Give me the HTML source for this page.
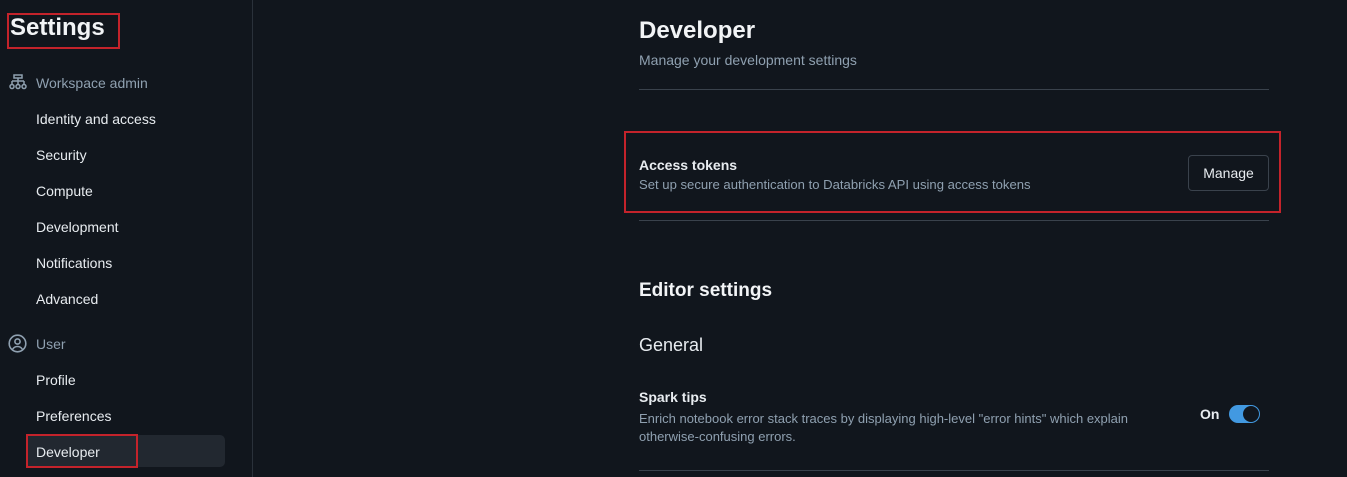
<!DOCTYPE html>
<html><head><meta charset="utf-8"><style>
*{margin:0;padding:0;box-sizing:border-box}
body{width:1347px;height:477px;background:#11161d;color:#e8ecf0;font-family:"Liberation Sans",sans-serif;position:relative;overflow:hidden}
.a{position:absolute;white-space:nowrap}
.side{position:absolute;left:252px;top:0;width:1px;height:477px;background:#2a313a}
.nav{font-size:14px;color:#e8ecf0;left:36px}
.grp{font-size:14px;color:#8fa0b0;left:36px}
.muted{color:#8fa0b0}
.hr{position:absolute;left:639px;width:630px;height:1px;background:#3a424c}
.red{position:absolute;border:2px solid #c4232b}
</style></head><body>
<div class="side"></div>
<div class="a" style="left:10px;top:14px;font-size:24px;font-weight:bold;color:#f2f4f6">Settings</div>
<div class="red" style="left:7px;top:13px;width:113px;height:36px"></div>

<svg class="a" style="left:9px;top:74px" width="18" height="16" viewBox="0 0 18 16" fill="none" stroke="#8fa0b0" stroke-width="1.5">
<rect x="5" y="1" width="8" height="3"/><path d="M9 4v3M3 7h12M3 7v3M9 7v3M15 7v3"/>
<circle cx="3" cy="12.5" r="2"/><circle cx="9" cy="12.5" r="2"/><circle cx="15" cy="12.5" r="2"/></svg>
<div class="a grp" style="top:75px">Workspace admin</div>
<div class="a nav" style="top:111px">Identity and access</div>
<div class="a nav" style="top:147px">Security</div>
<div class="a nav" style="top:183px">Compute</div>
<div class="a nav" style="top:219px">Development</div>
<div class="a nav" style="top:255px">Notifications</div>
<div class="a nav" style="top:291px">Advanced</div>

<svg class="a" style="left:8px;top:334px" width="19" height="19" viewBox="0 0 19 19" fill="none" stroke="#8fa0b0" stroke-width="1.6">
<circle cx="9.5" cy="9.5" r="8.3"/><circle cx="9.5" cy="7.5" r="2.6"/><path d="M4.5 15.5c1.2-2.2 3-3 5-3s3.8.8 5 3"/></svg>
<div class="a grp" style="top:336px">User</div>
<div class="a nav" style="top:372px">Profile</div>
<div class="a nav" style="top:408px">Preferences</div>
<div class="a" style="left:26px;top:435px;width:199px;height:32px;background:#222830;border-radius:5px"></div>
<div class="a nav" style="top:444px">Developer</div>
<div class="red" style="left:26px;top:434px;width:112px;height:34px"></div>

<div class="a" style="left:639px;top:17px;font-size:24px;font-weight:bold;color:#f2f4f6">Developer</div>
<div class="a muted" style="left:639px;top:52px;font-size:14px">Manage your development settings</div>
<div class="hr" style="top:89px"></div>

<div class="red" style="left:624px;top:131px;width:657px;height:82px"></div>
<div class="a" style="left:639px;top:157px;font-size:14px;font-weight:bold">Access tokens</div>
<div class="a muted" style="left:639px;top:177px;font-size:13.1px">Set up secure authentication to Databricks API using access tokens</div>
<div class="a" style="left:1188px;top:155px;width:81px;height:36px;border:1px solid #3a424c;border-radius:4px;font-size:14px;text-align:center;line-height:34px">Manage</div>
<div class="hr" style="top:220px"></div>

<div class="a" style="left:639px;top:280px;font-size:19px;font-weight:bold;color:#f2f4f6">Editor settings</div>
<div class="a" style="left:639px;top:335px;font-size:18px;color:#e8ecf0">General</div>
<div class="a" style="left:639px;top:389px;font-size:14px;font-weight:bold">Spark tips</div>
<div class="a muted" style="left:639px;top:410px;font-size:13px;line-height:18px">Enrich notebook error stack traces by displaying high-level "error hints" which explain<br>otherwise-confusing errors.</div>
<div class="a" style="left:1200px;top:406px;font-size:14px;font-weight:bold">On</div>
<div class="a" style="left:1229px;top:405px;width:31px;height:18px;border-radius:9px;background:#4299e1"></div>
<div class="a" style="left:1243px;top:406px;width:16px;height:16px;border-radius:50%;background:#11161d"></div>
<div class="hr" style="top:470px"></div>
</body></html>
